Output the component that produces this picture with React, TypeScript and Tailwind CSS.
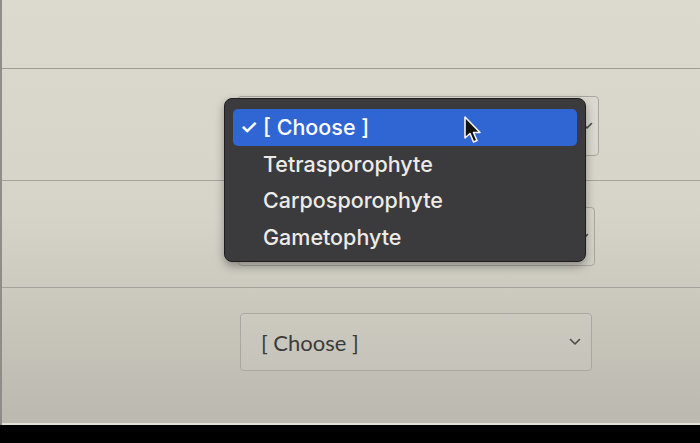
import React from 'react';

// Native select rows with an open macOS-style popup over the first one.
const OPTIONS = ['[ Choose ]', 'Tetrasporophyte', 'Carposporophyte', 'Gametophyte'];

function Chevron() {
  return (
    <svg width="12" height="8" viewBox="0 0 12 8">
      <path d="M1.5 1.5 L6 6 L10.5 1.5" fill="none" stroke="#4a4a46" strokeWidth="1.6" strokeLinecap="round" strokeLinejoin="round" />
    </svg>
  );
}

// covered: the open popup hides the value, only the box edge and chevron tip show
function SelectBox({ className, covered = false }: { className: string; covered?: boolean }) {
  return (
    <div
      className={`flex items-center justify-between rounded-[4px] border border-[#a9a8a0] bg-white/5 pl-[20px] ${
        covered ? 'pr-[5px]' : 'pr-[10px]'
      } ${className}`}
    >
      <span className="text-[22px] text-[#3b3b38]" style={{ fontFamily: 'Lato, "Open Sans", sans-serif' }}>
        {covered ? '' : '[ Choose ]'}
      </span>
      <Chevron />
    </div>
  );
}

function Cursor() {
  return (
    <svg width="22" height="30" viewBox="0 0 22 30" className="absolute left-[463px] top-[115px]">
      <path
        d="M2 2 L2 23 L7 18.5 L10.5 27 L14 25.5 L10.5 17.5 L17 17.5 Z"
        fill="#111"
        stroke="#f4f4f4"
        strokeWidth="1.6"
        strokeLinejoin="round"
      />
    </svg>
  );
}

function Menu() {
  return (
    <div
      className="absolute left-[224px] top-[98px] w-[362px] rounded-[8px] border border-[#1e1e1f] bg-[#3b3a3c] px-[8px] pt-[10px] pb-[6px] shadow-[0_4px_10px_rgba(0,0,0,0.35)]"
      style={{ fontFamily: 'Inter, "Noto Sans", sans-serif' }}
    >
      {OPTIONS.map((o, i) => (
        <div
          key={o}
          className={`flex h-[36.5px] items-center rounded-[5px] text-[21.5px] font-medium ${
            i === 0 ? 'bg-[#2f66d4] text-white' : 'text-[#ecebe8]'
          }`}
        >
          <span className="w-[30px] pl-[7px] text-[20px] font-semibold">{i === 0 ? '✓' : ''}</span>
          <span>{o}</span>
        </div>
      ))}
    </div>
  );
}

export default function App() {
  return (
    <div className="relative h-[443px] w-[700px] overflow-hidden bg-black">
      <div className="flex h-[425px] flex-col border-l-2 border-[#8e8d87] bg-gradient-to-b from-[#dcdacf] via-[#d6d4c9] to-[#bbb9af]">
        <div className="h-[69px] border-b border-[#9d9c95]" />
        <div className="flex h-[112px] flex-col border-b border-[#a3a29b] pt-[27px]">
          <SelectBox covered className="ml-[235px] h-[60px] w-[362px]" />
        </div>
        <div className="flex h-[107px] flex-col border-b border-[#a3a29b] pt-[26px]">
          <SelectBox covered className="ml-[236px] h-[59px] w-[357px]" />
        </div>
        <div className="flex flex-1 flex-col border-b-2 border-[#e2e0d8] pt-[25px]">
          <SelectBox className="ml-[238px] h-[58px] w-[352px]" />
        </div>
      </div>
      <Menu />
      <Cursor />
    </div>
  );
}
